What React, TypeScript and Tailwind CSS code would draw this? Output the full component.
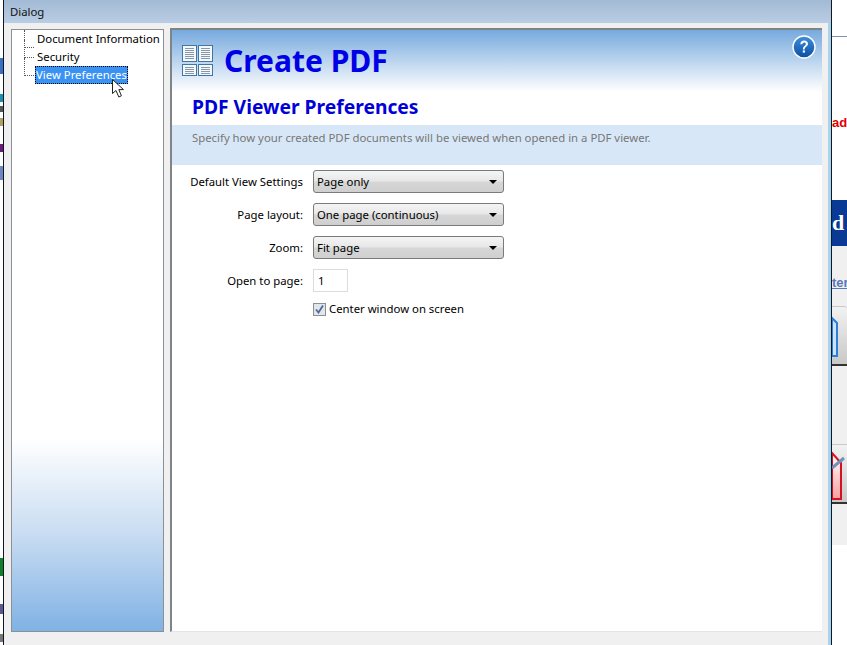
const uiFont = "font-['Noto_Sans','Open_Sans',sans-serif]";

const treeItems = [
  { label: "Document Information", selected: false },
  { label: "Security", selected: false },
  { label: "View Preferences", selected: true },
];

const dropdowns = [
  { label: "Default View Settings", value: "Page only" },
  { label: "Page layout:", value: "One page (continuous)" },
  { label: "Zoom:", value: "Fit page" },
];

function Cursor() {
  return (
    <svg className="absolute left-[107px] top-[55px]" width="15" height="21" viewBox="0 0 15 21">
      <path d="M1.5 1.5 V15.5 L5 12.5 L7.8 19 L10.4 17.8 L7.8 11.6 L12.5 11.6 Z" fill="#fff" stroke="#222" strokeWidth="1" />
    </svg>
  );
}

function HelpIcon() {
  return (
    <svg className="absolute right-[6px] top-[5px]" width="24" height="24" viewBox="0 0 24 24">
      <defs>
        <linearGradient id="helpBg" x1="0" y1="0" x2="0" y2="1">
          <stop offset="0" stopColor="#3f8fdc" />
          <stop offset="1" stopColor="#0b4da2" />
        </linearGradient>
      </defs>
      <circle cx="12" cy="12" r="11" fill="url(#helpBg)" stroke="#fff" strokeWidth="1.4" />
      <path d="M8.3 9.2 C8.5 6.6 10.2 5.6 12.2 5.6 C14.4 5.6 16 6.9 16 8.8 C16 10.4 15 11.1 13.9 11.9 C13 12.6 12.7 13 12.7 14.4 H10.9 C10.9 12.6 11.3 11.7 12.4 10.9 C13.4 10.2 13.9 9.8 13.9 8.9 C13.9 8 13.2 7.4 12.2 7.4 C11.1 7.4 10.5 8.1 10.4 9.2 Z" fill="#fff" />
      <rect x="10.8" y="15.4" width="2.1" height="2.2" fill="#fff" />
    </svg>
  );
}

function Page({ x, y, h }: { x: number; y: number; h: number }) {
  const lines = [];
  for (let ly = y + 3; ly < y + h - 1; ly += 2) lines.push(ly);
  return (
    <g>
      <rect x={x + 0.5} y={y + 0.5} width="14" height={h} fill="#f4f8fc" stroke="#3f76a8" />
      {lines.map((ly) => (
        <line key={ly} x1={x + 3} x2={x + 12} y1={ly + 0.5} y2={ly + 0.5} stroke="#8a98a6" />
      ))}
    </g>
  );
}

function BooksIcon() {
  return (
    <svg width="31" height="31" viewBox="0 0 31 31" className="shrink-0">
      <Page x={0} y={0} h={16} />
      <Page x={16} y={0} h={16} />
      <Page x={0} y={19} h={11} />
      <Page x={16} y={19} h={11} />
    </svg>
  );
}

function Dropdown({ value }: { value: string }) {
  return (
    <div className="flex h-[23px] w-[191px] items-center justify-between rounded-[3px] border border-[#7a7a7a] bg-[linear-gradient(#f5f5f5_0%,#e8e8e8_45%,#d6d6d6_55%,#cfcfcf_100%)] pl-[3px] pr-[6px] text-black">
      <span>{value}</span>
      <span className="h-0 w-0 border-x-[4px] border-t-[4px] border-x-transparent border-t-black" />
    </div>
  );
}

function LeftEdge() {
  return (
    <div className="flex w-[3px] shrink-0 flex-col overflow-hidden bg-white">
      <div className="mt-[58px] h-[16px] bg-[#3b6fc4]" />
      <div className="mt-[20px] h-[8px] bg-[#1d8fb0]" />
      <div className="mt-[4px] h-[6px] bg-[#555]" />
      <div className="mt-[6px] h-[8px] bg-[#b0a060]" />
      <div className="mt-[18px] h-[8px] bg-[#6a1b7a]" />
      <div className="mt-[14px] h-[14px] bg-[#6f86c0]" />
      <div className="mt-[378px] h-[18px] bg-[#0f7f2c]" />
      <div className="mt-[28px] h-[10px] bg-[#5a5a90]" />
      <div className="mt-[20px] h-[8px] bg-[#777]" />
    </div>
  );
}

function RightEdge() {
  return (
    <div className="flex w-[15px] shrink-0 flex-col overflow-hidden bg-white font-['Liberation_Sans',sans-serif]">
      <div className="mt-[36px] h-px bg-[#7d93ba]" />
      <div className="mt-[79px] h-[14px] whitespace-nowrap text-[13px] leading-[14px] font-bold text-[#e00000]">ad!</div>
      <div className="mt-[70px] flex h-[46px] items-center bg-[#0a3a94] font-['Liberation_Serif',serif] text-[22px] font-bold text-white">d</div>
      <div className="flex h-[299px] flex-col bg-[#f0f0f0]">
        <div className="mt-[29px] h-[16px] text-[13px] leading-[16px] font-bold whitespace-nowrap text-[#5a78b8] underline">ter</div>
        <div className="mt-[15px] h-[60px] rounded-tr-[3px] border-t border-b-2 border-t-[#c8c8c8] border-b-[#333] bg-[linear-gradient(#f2f2f2,#c8c8c8)]">
          <svg width="15" height="57" viewBox="0 0 15 57" className="block">
            <path d="M0 11 L5 16 V49 H0 Z" fill="#cfe2f7" stroke="#2b7fd6" strokeWidth="2" />
          </svg>
        </div>
        <div className="mt-[78px] h-[60px] border-t border-b-2 border-t-[#c8c8c8] border-b-[#333] bg-[linear-gradient(#f2f2f2,#c8c8c8)]">
          <svg width="15" height="57" viewBox="0 0 15 57" className="block">
            <defs>
              <linearGradient id="redFill" x1="0" y1="0" x2="0" y2="1">
                <stop offset="0" stopColor="#fff" />
                <stop offset="1" stopColor="#f6a0a0" />
              </linearGradient>
            </defs>
            <path d="M0 8 L9 18 V54 H0 Z" fill="url(#redFill)" stroke="#d81020" strokeWidth="2" />
            <path d="M0 23 L12 13" stroke="#6f93bd" strokeWidth="3" />
          </svg>
        </div>
      </div>
      <div className="flex-1 bg-white" />
    </div>
  );
}

export default function App() {
  return (
    <div className={`flex h-[645px] w-[847px] overflow-hidden bg-white text-[11.35px] leading-[18px] ${uiFont}`}>
      <LeftEdge />
      <div className="flex w-[829px] shrink-0 flex-col border-x border-[#101820]">
        <div className="flex h-[23px] shrink-0 items-center bg-[linear-gradient(#a3bad5,#b9cde4)] pl-[6px] text-[#111]">
          Dialog
        </div>
        <div className="relative flex flex-1 gap-[6px] border-r-[3px] border-[#a9d3ef] bg-[#f0f0f0] pt-[5px] pb-[13px] pl-[7px] pr-[4px]">
          <div className="mt-px flex w-[153px] flex-col border border-[#8b9095] bg-[linear-gradient(#ffffff_0%,#ffffff_68%,#c8dcf2_84%,#80b2e4_100%)] pl-[12px]">
            {treeItems.map((item, i) => (
              <div key={item.label} className="flex h-[18px] items-center">
                <div className={`mb-[1px] h-[18px] w-[10px] shrink-0 -translate-y-[8px] border-b border-l border-dotted border-[#555] ${i === 0 ? "h-[10px] translate-y-0 self-start" : ""}`} />
                {item.selected ? (
                  <span className="ml-px border border-dotted border-black bg-[#3a92f2] leading-[16px] text-white">
                    {item.label}
                  </span>
                ) : (
                  <span className="ml-[3px] whitespace-nowrap text-black">{item.label}</span>
                )}
              </div>
            ))}
          </div>
          <div className="relative flex w-[652px] flex-col border-t-2 border-l-2 border-[#7f8489] border-b border-b-[#e4e4e4] bg-white">
            <HelpIcon />
            <div className="flex h-[62px] items-start gap-[11px] bg-[linear-gradient(#77aade,#ffffff)] pt-[15px] pl-[10px]">
              <BooksIcon />
              <h1 className="text-[30px] leading-[32px] font-bold text-[#0000e6]">Create PDF</h1>
            </div>
            <h2 className="mt-[3px] h-[30px] pl-[20px] text-[19.25px] leading-[24px] font-bold text-[#0000d8]">
              PDF Viewer Preferences
            </h2>
            <div className="h-[40px] bg-[#d8e7f7] pt-[4px] pl-[20px] text-[#777]">
              Specify how your created PDF documents will be viewed when opened in a PDF viewer.
            </div>
            <div className="mt-[5px] flex flex-col gap-[10px] text-black">
              {dropdowns.map((d) => (
                <div key={d.label} className="flex items-center gap-[10px]">
                  <div className="w-[131px] text-right">{d.label}</div>
                  <Dropdown value={d.value} />
                </div>
              ))}
              <div className="flex items-center gap-[10px]">
                <div className="w-[131px] text-right">Open to page:</div>
                <div className="flex h-[23px] w-[35px] items-center border border-[#dcdcdc] bg-white pl-[4px]">1</div>
              </div>
              <div className="-mt-[2px] flex items-center gap-[3px] pl-[141px]">
                <div className="flex h-[13px] w-[13px] items-center justify-center border border-[#8e8f8f] bg-[#e2e6ec]">
                  <svg width="11" height="11" viewBox="0 0 11 11">
                    <path d="M2 5.5 L4.5 8.5 L9 1.5" fill="none" stroke="#4a6a9a" strokeWidth="1.8" />
                  </svg>
                </div>
                <span>Center window on screen</span>
              </div>
            </div>
          </div>
          <Cursor />
        </div>
      </div>
      <RightEdge />
    </div>
  );
}
